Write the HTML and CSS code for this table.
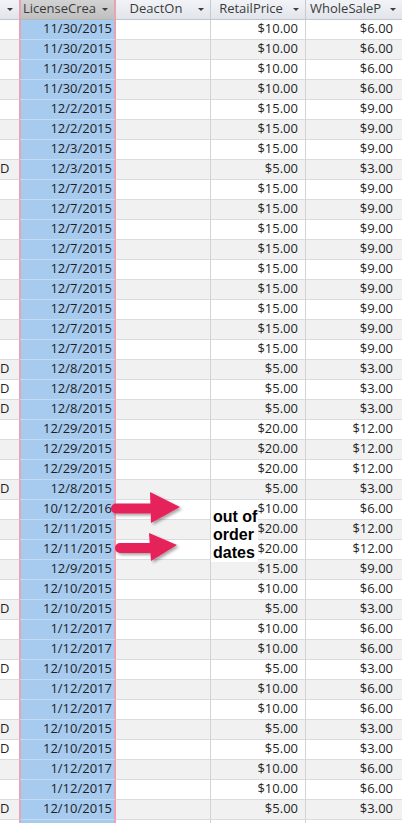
FILE: index.html
```html
<!DOCTYPE html>
<html>
<head>
<meta charset="utf-8">
<link rel="stylesheet" href="styles.css">
</head>
<body>
<div class="sheet">
  <div class="row head">
    <div class="hcell hfirst"><span class="hlabel"></span><span class="hdrop"></span></div>
    <div class="hcell hsel"><span class="hlabel">LicenseCrea</span><span class="hdrop"></span></div>
    <div class="hcell"><span class="hlabel">DeactOn</span><span class="hdrop"></span></div>
    <div class="hcell"><span class="hlabel">RetailPrice</span><span class="hdrop"></span></div>
    <div class="hcell hlast"><span class="hlabel">WholeSaleP</span><span class="hdrop"></span></div>
  </div>
  <div class="row"><div class="cell a"></div><div class="cell sel">11/30/2015</div><div class="cell d"></div><div class="cell r">$10.00</div><div class="cell w">$6.00</div></div>
  <div class="row alt"><div class="cell a"></div><div class="cell sel">11/30/2015</div><div class="cell d"></div><div class="cell r">$10.00</div><div class="cell w">$6.00</div></div>
  <div class="row"><div class="cell a"></div><div class="cell sel">11/30/2015</div><div class="cell d"></div><div class="cell r">$10.00</div><div class="cell w">$6.00</div></div>
  <div class="row alt"><div class="cell a"></div><div class="cell sel">11/30/2015</div><div class="cell d"></div><div class="cell r">$10.00</div><div class="cell w">$6.00</div></div>
  <div class="row"><div class="cell a"></div><div class="cell sel">12/2/2015</div><div class="cell d"></div><div class="cell r">$15.00</div><div class="cell w">$9.00</div></div>
  <div class="row alt"><div class="cell a"></div><div class="cell sel">12/2/2015</div><div class="cell d"></div><div class="cell r">$15.00</div><div class="cell w">$9.00</div></div>
  <div class="row"><div class="cell a"></div><div class="cell sel">12/3/2015</div><div class="cell d"></div><div class="cell r">$15.00</div><div class="cell w">$9.00</div></div>
  <div class="row alt"><div class="cell a">D</div><div class="cell sel">12/3/2015</div><div class="cell d"></div><div class="cell r">$5.00</div><div class="cell w">$3.00</div></div>
  <div class="row"><div class="cell a"></div><div class="cell sel">12/7/2015</div><div class="cell d"></div><div class="cell r">$15.00</div><div class="cell w">$9.00</div></div>
  <div class="row alt"><div class="cell a"></div><div class="cell sel">12/7/2015</div><div class="cell d"></div><div class="cell r">$15.00</div><div class="cell w">$9.00</div></div>
  <div class="row"><div class="cell a"></div><div class="cell sel">12/7/2015</div><div class="cell d"></div><div class="cell r">$15.00</div><div class="cell w">$9.00</div></div>
  <div class="row alt"><div class="cell a"></div><div class="cell sel">12/7/2015</div><div class="cell d"></div><div class="cell r">$15.00</div><div class="cell w">$9.00</div></div>
  <div class="row"><div class="cell a"></div><div class="cell sel">12/7/2015</div><div class="cell d"></div><div class="cell r">$15.00</div><div class="cell w">$9.00</div></div>
  <div class="row alt"><div class="cell a"></div><div class="cell sel">12/7/2015</div><div class="cell d"></div><div class="cell r">$15.00</div><div class="cell w">$9.00</div></div>
  <div class="row"><div class="cell a"></div><div class="cell sel">12/7/2015</div><div class="cell d"></div><div class="cell r">$15.00</div><div class="cell w">$9.00</div></div>
  <div class="row alt"><div class="cell a"></div><div class="cell sel">12/7/2015</div><div class="cell d"></div><div class="cell r">$15.00</div><div class="cell w">$9.00</div></div>
  <div class="row"><div class="cell a"></div><div class="cell sel">12/7/2015</div><div class="cell d"></div><div class="cell r">$15.00</div><div class="cell w">$9.00</div></div>
  <div class="row alt"><div class="cell a">D</div><div class="cell sel">12/8/2015</div><div class="cell d"></div><div class="cell r">$5.00</div><div class="cell w">$3.00</div></div>
  <div class="row"><div class="cell a">D</div><div class="cell sel">12/8/2015</div><div class="cell d"></div><div class="cell r">$5.00</div><div class="cell w">$3.00</div></div>
  <div class="row alt"><div class="cell a">D</div><div class="cell sel">12/8/2015</div><div class="cell d"></div><div class="cell r">$5.00</div><div class="cell w">$3.00</div></div>
  <div class="row"><div class="cell a"></div><div class="cell sel">12/29/2015</div><div class="cell d"></div><div class="cell r">$20.00</div><div class="cell w">$12.00</div></div>
  <div class="row alt"><div class="cell a"></div><div class="cell sel">12/29/2015</div><div class="cell d"></div><div class="cell r">$20.00</div><div class="cell w">$12.00</div></div>
  <div class="row"><div class="cell a"></div><div class="cell sel">12/29/2015</div><div class="cell d"></div><div class="cell r">$20.00</div><div class="cell w">$12.00</div></div>
  <div class="row alt"><div class="cell a">D</div><div class="cell sel">12/8/2015</div><div class="cell d"></div><div class="cell r">$5.00</div><div class="cell w">$3.00</div></div>
  <div class="row"><div class="cell a"></div><div class="cell sel">10/12/2016</div><div class="cell d"></div><div class="cell r">$10.00</div><div class="cell w">$6.00</div></div>
  <div class="row alt"><div class="cell a"></div><div class="cell sel">12/11/2015</div><div class="cell d"></div><div class="cell r">$20.00</div><div class="cell w">$12.00</div></div>
  <div class="row"><div class="cell a"></div><div class="cell sel">12/11/2015</div><div class="cell d"></div><div class="cell r">$20.00</div><div class="cell w">$12.00</div></div>
  <div class="row alt"><div class="cell a"></div><div class="cell sel">12/9/2015</div><div class="cell d"></div><div class="cell r">$15.00</div><div class="cell w">$9.00</div></div>
  <div class="row"><div class="cell a"></div><div class="cell sel">12/10/2015</div><div class="cell d"></div><div class="cell r">$10.00</div><div class="cell w">$6.00</div></div>
  <div class="row alt"><div class="cell a">D</div><div class="cell sel">12/10/2015</div><div class="cell d"></div><div class="cell r">$5.00</div><div class="cell w">$3.00</div></div>
  <div class="row"><div class="cell a"></div><div class="cell sel">1/12/2017</div><div class="cell d"></div><div class="cell r">$10.00</div><div class="cell w">$6.00</div></div>
  <div class="row alt"><div class="cell a"></div><div class="cell sel">1/12/2017</div><div class="cell d"></div><div class="cell r">$10.00</div><div class="cell w">$6.00</div></div>
  <div class="row"><div class="cell a">D</div><div class="cell sel">12/10/2015</div><div class="cell d"></div><div class="cell r">$5.00</div><div class="cell w">$3.00</div></div>
  <div class="row alt"><div class="cell a"></div><div class="cell sel">1/12/2017</div><div class="cell d"></div><div class="cell r">$10.00</div><div class="cell w">$6.00</div></div>
  <div class="row"><div class="cell a"></div><div class="cell sel">1/12/2017</div><div class="cell d"></div><div class="cell r">$10.00</div><div class="cell w">$6.00</div></div>
  <div class="row alt"><div class="cell a">D</div><div class="cell sel">12/10/2015</div><div class="cell d"></div><div class="cell r">$5.00</div><div class="cell w">$3.00</div></div>
  <div class="row"><div class="cell a">D</div><div class="cell sel">12/10/2015</div><div class="cell d"></div><div class="cell r">$5.00</div><div class="cell w">$3.00</div></div>
  <div class="row alt"><div class="cell a"></div><div class="cell sel">1/12/2017</div><div class="cell d"></div><div class="cell r">$10.00</div><div class="cell w">$6.00</div></div>
  <div class="row"><div class="cell a"></div><div class="cell sel">1/12/2017</div><div class="cell d"></div><div class="cell r">$10.00</div><div class="cell w">$6.00</div></div>
  <div class="row alt"><div class="cell a">D</div><div class="cell sel">12/10/2015</div><div class="cell d"></div><div class="cell r">$5.00</div><div class="cell w">$3.00</div></div>
  <div class="row"><div class="cell a"></div><div class="cell sel"></div><div class="cell d"></div><div class="cell r"></div><div class="cell w"></div></div>
</div>

<svg class="arrows" width="402" height="823" viewBox="0 0 402 823" xmlns="http://www.w3.org/2000/svg">
  <defs>
    <filter id="sh" x="-20%" y="-20%" width="150%" height="160%">
      <feDropShadow dx="2" dy="2" stdDeviation="1.4" flood-color="#000" flood-opacity="0.35"/>
    </filter>
  </defs>
  <g fill="#e6215a" filter="url(#sh)">
    <rect x="111" y="503.5" width="44" height="10" rx="5"/>
    <polygon points="150,492 180,507 151,523"/>
    <rect x="115" y="543" width="40" height="10" rx="5"/>
    <polygon points="149,533 177,545 151,561"/>
  </g>
</svg>

<div class="note">out of order dates</div>
</body>
</html>
```

FILE: styles.css
```css
html, body {
  margin: 0;
  padding: 0;
}

body {
  width: 402px;
  height: 823px;
  overflow: hidden;
  position: relative;
  background: #ffffff;
  font-family: "Open Sans", "DejaVu Sans", sans-serif;
  font-size: 13px;
  color: #1f1f1f;
}

.sheet {
  display: flex;
  flex-direction: column;
}

.row {
  display: grid;
  grid-template-columns: 19px 97px 95px 95px 96px;
  height: 20px;
  flex: none;
}

/* ---------- header ---------- */
.hcell {
  display: flex;
  box-sizing: border-box;
  height: 20px;
  border-right: 1px solid #c6c9ce;
  border-bottom: 1px solid #c3c6cb;
  background: linear-gradient(#f1f3f7, #e1e5eb);
  color: #3b3b3b;
  line-height: 17px;
  overflow: hidden;
}

.hfirst {
  border-right: none;
}

.hlast {
  border-right: none;
}

.hsel {
  background: linear-gradient(#d3d3d3, #c0c0c0);
  border-left: 2px solid #e9a3b4;
  border-right: 2px solid #e9a3b4;
  border-bottom-color: #b7b7b7;
}

.hlabel {
  flex: 1;
  min-width: 0;
  white-space: nowrap;
  text-align: center;
  padding-left: 4px;
}

.hsel .hlabel {
  padding-left: 2px;
  text-align: left;
}

.hlast .hlabel {
  text-align: left;
}

.hfirst .hlabel {
  padding-left: 0;
}

.hdrop {
  flex: none;
  width: 18px;
  position: relative;
}

.hdrop::after {
  content: "";
  position: absolute;
  left: 6px;
  top: 8px;
  width: 0;
  height: 0;
  border-left: 3px solid transparent;
  border-right: 3px solid transparent;
  border-top: 3px solid #3c3c3c;
}

/* ---------- data cells ---------- */
.cell {
  box-sizing: border-box;
  height: 20px;
  border-bottom: 1px solid #d9dbde;
  border-right: 1px solid #d0d2d5;
  line-height: 16px;
  text-align: right;
  white-space: nowrap;
  overflow: hidden;
  background: #ffffff;
}

.row.alt .cell {
  background: #f1f1f1;
}

.cell.a {
  text-align: left;
  border-right: none;
  padding-left: 0;
}

.cell.sel,
.row.alt .cell.sel {
  background: #a7cbef;
  border-left: 2px solid #e9a3b4;
  border-right: 2px solid #e9a3b4;
  border-bottom-color: #c4dbf3;
  padding-right: 2px;
}

.cell.r {
  padding-right: 7px;
}

.cell.w {
  border-right: none;
  padding-right: 9px;
}

/* ---------- overlays ---------- */
.arrows {
  position: absolute;
  left: 0;
  top: 0;
  pointer-events: none;
}

.note {
  position: absolute;
  left: 211px;
  top: 508px;
  width: 45px;
  padding-left: 2px;
  background: #ffffff;
  font-family: "Liberation Sans", Arial, sans-serif;
  font-weight: bold;
  font-size: 16px;
  line-height: 18px;
  color: #000000;
}
```
